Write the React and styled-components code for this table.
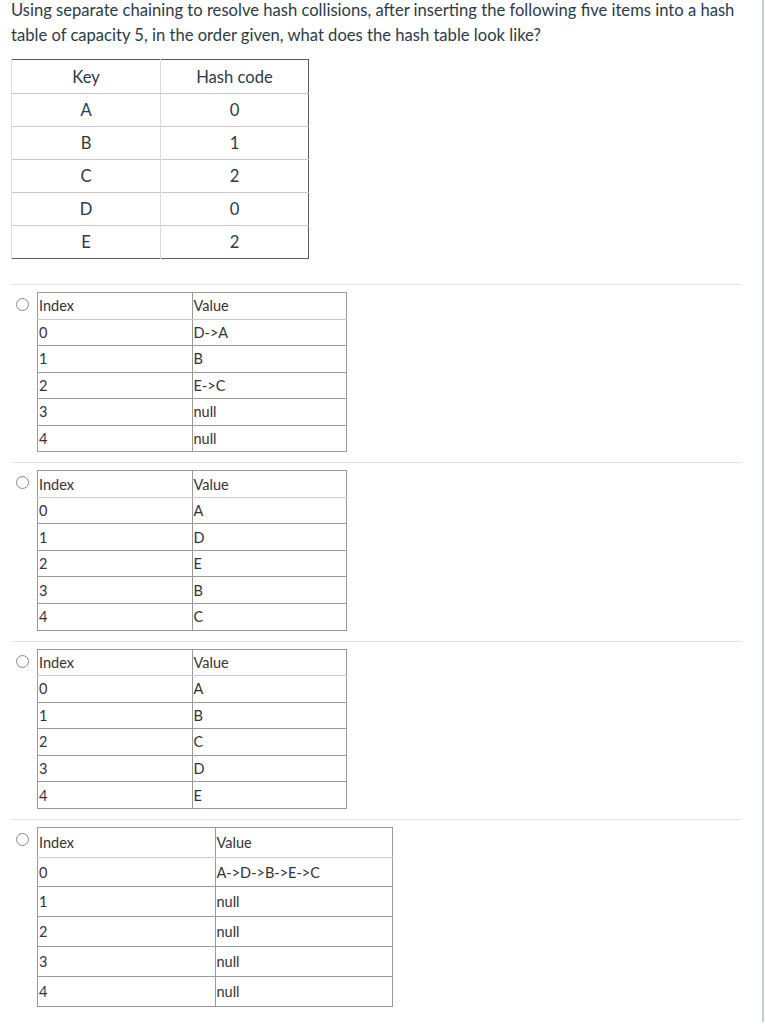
import React from "react";
import styled, { createGlobalStyle } from "styled-components";

const keyRows = [
  ["A", "0"],
  ["B", "1"],
  ["C", "2"],
  ["D", "0"],
  ["E", "2"],
];

const options = [
  { values: ["D->A", "B", "E->C", "null", "null"], width: 310, rowHeight: 26.55 },
  { values: ["A", "D", "E", "B", "C"], width: 310, rowHeight: 26.55 },
  { values: ["A", "B", "C", "D", "E"], width: 310, rowHeight: 26.55 },
  { values: ["A->D->B->E->C", "null", "null", "null", "null"], width: 356, rowHeight: 29.8 },
];

const App = () => {
  return (
    <>
      <GlobalStyle />
      <Page>
        <Question>
          Using separate chaining to resolve hash collisions, after inserting the following five items into a hash
          table of capacity 5, in the order given, what does the hash table look like?
        </Question>

        <KeyTable>
          <colgroup>
            <col style={{ width: 149 }} />
            <col style={{ width: 148 }} />
          </colgroup>
          <thead>
            <tr>
              <KeyHead>Key</KeyHead>
              <KeyHead>Hash code</KeyHead>
            </tr>
          </thead>
          <tbody>
            {keyRows.map(([k, h]) => (
              <tr key={k}>
                <KeyCell>{k}</KeyCell>
                <KeyCell>{h}</KeyCell>
              </tr>
            ))}
          </tbody>
        </KeyTable>

        {options.map((opt, i) => (
          <Option key={i}>
            <Radio />
            <AnswerTable $width={opt.width}>
              <tbody>
                <AnswerRow $h={opt.rowHeight}>
                  <AnswerCell>Index</AnswerCell>
                  <AnswerCell>Value</AnswerCell>
                </AnswerRow>
                {opt.values.map((v, idx) => (
                  <AnswerRow key={idx} $h={opt.rowHeight}>
                    <AnswerCell>{idx}</AnswerCell>
                    <AnswerCell>{v}</AnswerCell>
                  </AnswerRow>
                ))}
              </tbody>
            </AnswerTable>
          </Option>
        ))}
      </Page>
    </>
  );
};

export default App;

// Styled Components
const GlobalStyle = createGlobalStyle`
  body {
    margin: 0;
    background: #fff;
    font-family: Lato, "Open Sans", sans-serif;
    color: #2d3b45;
  }
`;

const Page = styled.div`
  box-sizing: border-box;
  width: 764px;
  min-height: 1024px;
  padding: 0 20px 0 11px;
  border-right: 2px solid #c7cdd1;
`;

const Question = styled.p`
  margin: -2px 0 0;
  font-size: 16.6px;
  line-height: 25px;
`;

const KeyTable = styled.table`
  margin: 11px 0 25px;
  width: 298px;
  table-layout: fixed;
  border-collapse: collapse;
  border: 1px solid #5a5a5a;
  font-size: 16.6px;
`;

const KeyHead = styled.th`
  height: 33px;
  padding: 0;
  font-weight: 400;
  text-align: center;
  border-bottom: 1px solid #c8c8c8;
  border-left: 1px solid #dcdcdc;
`;

const KeyCell = styled.td`
  height: 32px;
  padding: 0;
  text-align: center;
  border-top: 1px solid #c8c8c8;
  border-left: 1px solid #dcdcdc;
`;

const Option = styled.div`
  display: flex;
  align-items: flex-start;
  padding: 7px 0 10px;
  border-top: 1px solid #e2e2e2;
`;

const Radio = styled.span`
  flex: none;
  box-sizing: border-box;
  width: 13px;
  height: 13px;
  margin: 6px 8px 0 5px;
  border: 1px solid #8a8a8a;
  border-radius: 50%;
`;

const AnswerTable = styled.table`
  width: ${(p) => p.$width}px;
  table-layout: fixed;
  border-collapse: collapse;
  border: 1px solid #4a4a4a;
  font-size: 14.5px;
  color: #333;
`;

const AnswerRow = styled.tr`
  height: ${(p) => p.$h}px;
`;

const AnswerCell = styled.td`
  padding: 0 0 0 1px;
  text-align: left;
  vertical-align: middle;
  border: 1px solid #9a9a9a;
  width: 50%;

  tr:first-child > & {
    border-bottom-color: #c8c8c8;
  }
`;
